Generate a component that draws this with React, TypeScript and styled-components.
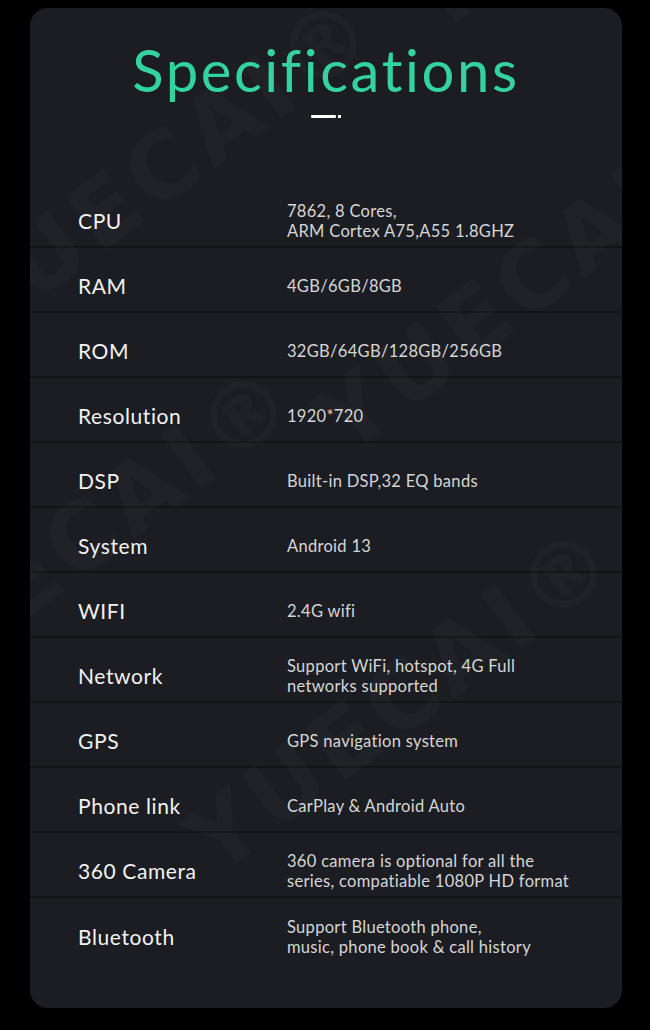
import React from 'react';
import styled, { createGlobalStyle } from 'styled-components';

const COLORS = {
  page: '#000000',
  card: '#1b1d22',
  line: '#111317',
  accent: '#33d3a1',
  label: '#f2f2f2',
  value: '#d6d6d6',
};

const GlobalStyle = createGlobalStyle`
  html, body {
    margin: 0;
    padding: 0;
    background: ${COLORS.page};
  }
  * {
    box-sizing: border-box;
  }
`;

const Page = styled.div`
  width: 650px;
  height: 1030px;
  padding: 8px 28px 22px 30px;
  background: ${COLORS.page};
  font-family: 'Lato', 'Liberation Sans', sans-serif;
`;

const Card = styled.section`
  position: relative;
  height: 1000px;
  background: ${COLORS.card};
  border-radius: 18px;
  overflow: hidden;
  padding-top: 33px;
  display: flex;
  flex-direction: column;
`;

const Header = styled.header`
  display: flex;
  flex-direction: column;
  align-items: center;
  height: 142px;
`;

const Title = styled.h1`
  margin: 0;
  font-family: 'Lato', sans-serif;
  font-weight: 400;
  font-size: 58px;
  line-height: 1;
  letter-spacing: 2.6px;
  color: ${COLORS.accent};
`;

const Dash = styled.div`
  margin-top: 16px;
  display: flex;
  align-items: center;
  gap: 2px;
  &::before {
    content: '';
    width: 25px;
    height: 3px;
    background: #ffffff;
    border-radius: 1px;
  }
  &::after {
    content: '';
    width: 3px;
    height: 3px;
    background: #ffffff;
  }
`;

const List = styled.div`
  display: flex;
  flex-direction: column;
`;

const Row = styled.div<{ $last?: boolean }>`
  display: grid;
  grid-template-columns: 209px 1fr;
  align-items: center;
  height: 65px;
  padding: 12px 0 0 48px;
  border-bottom: ${p => (p.$last ? 'none' : `2px solid ${COLORS.line}`)};
`;

const Label = styled.div`
  font-size: 21px;
  font-weight: 400;
  letter-spacing: 0.6px;
  color: ${COLORS.label};
`;

const Value = styled.div`
  font-size: 16.5px;
  line-height: 20px;
  letter-spacing: 0.3px;
  color: ${COLORS.value};
`;

const Watermark = styled.div<{ $x: number; $y: number }>`
  position: absolute;
  left: ${p => p.$x}px;
  top: ${p => p.$y}px;
  transform: rotate(-37deg);
  transform-origin: left bottom;
  font-family: 'DejaVu Sans', sans-serif;
  font-weight: 700;
  font-size: 92px;
  letter-spacing: 6px;
  color: rgba(255, 255, 255, 0.022);
  white-space: nowrap;
  pointer-events: none;
  user-select: none;
`;

const specs: { label: string; value: string[] }[] = [
  { label: 'CPU', value: ['7862, 8 Cores,', 'ARM Cortex A75,A55 1.8GHZ'] },
  { label: 'RAM', value: ['4GB/6GB/8GB'] },
  { label: 'ROM', value: ['32GB/64GB/128GB/256GB'] },
  { label: 'Resolution', value: ['1920*720'] },
  { label: 'DSP', value: ['Built-in DSP,32 EQ bands'] },
  { label: 'System', value: ['Android 13'] },
  { label: 'WIFI', value: ['2.4G wifi'] },
  { label: 'Network', value: ['Support WiFi, hotspot, 4G Full', 'networks supported'] },
  { label: 'GPS', value: ['GPS navigation system'] },
  { label: 'Phone link', value: ['CarPlay & Android Auto'] },
  { label: '360 Camera', value: ['360 camera is optional for all the', 'series, compatiable 1080P HD format'] },
  { label: 'Bluetooth', value: ['Support Bluetooth phone,', 'music, phone book & call history'] },
];

const marks = [
  { x: -40, y: 250 },
  { x: 330, y: 360 },
  { x: -120, y: 620 },
  { x: 200, y: 780 },
  { x: 420, y: -60 },
];

export default function App() {
  return (
    <Page>
      <GlobalStyle />
      <Card>
        <Header>
          <Title>Specifications</Title>
          <Dash />
        </Header>
        <List>
          {specs.map((s, i) => (
            <Row key={s.label} $last={i === specs.length - 1}>
              <Label>{s.label}</Label>
              <Value>
                {s.value.map(line => (
                  <div key={line}>{line}</div>
                ))}
              </Value>
            </Row>
          ))}
        </List>
        {marks.map((m, i) => (
          <Watermark key={i} $x={m.x} $y={m.y} aria-hidden>
            YUECAI®
          </Watermark>
        ))}
      </Card>
    </Page>
  );
}
